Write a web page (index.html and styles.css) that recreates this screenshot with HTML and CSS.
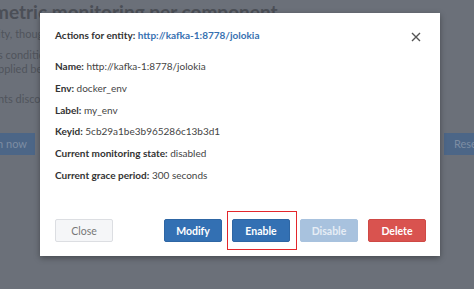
FILE: index.html
```html
<!DOCTYPE html>
<html>
<head>
<meta charset="utf-8">
<link rel="stylesheet" href="styles.css">
</head>
<body>
<div class="page">
  <h1 class="page-title">metric monitoring per component</h1>
  <p class="line l1">ity, though</p>
  <p class="line l2">s condition</p>
  <p class="line l3">pplied be</p>
  <p class="line l4">nts disco</p>
  <div class="page-actions">
    <span class="page-btn left">n now</span>
    <span class="page-btn right">Reset</span>
  </div>
</div>

<div class="modal">
  <div class="modal-header">
    <div class="modal-title">Actions for entity: <a class="link" href="#">http://kafka-1:8778/jolokia</a></div>
    <button class="close-x" aria-label="Close">
      <svg width="10" height="10" viewBox="0 0 10 10"><path d="M1 1L9 9M9 1L1 9" stroke="#555" stroke-width="1.4" fill="none"/></svg>
    </button>
  </div>
  <div class="modal-body">
    <div class="row"><b>Name:</b> http://kafka-1:8778/jolokia</div>
    <div class="row"><b>Env:</b> docker_env</div>
    <div class="row"><b>Label:</b> my_env</div>
    <div class="row"><b>Keyid:</b> 5cb29a1be3b965286c13b3d1</div>
    <div class="row"><b>Current monitoring state:</b> disabled</div>
    <div class="row"><b>Current grace period:</b> 300 seconds</div>
  </div>
  <div class="modal-footer">
    <button class="btn btn-default">Close</button>
    <div class="btn-group">
      <button class="btn btn-primary">Modify</button>
      <span class="highlight"><button class="btn btn-primary">Enable</button></span>
      <button class="btn btn-disabled">Disable</button>
      <button class="btn btn-danger">Delete</button>
    </div>
  </div>
</div>
</body>
</html>
```

FILE: styles.css
```css
html, body {
  margin: 0;
  padding: 0;
  width: 474px;
  height: 289px;
  overflow: hidden;
  background: #6b7079;
  font-family: "Lato", "Open Sans", sans-serif;
}
.page {
  margin-left: -7px;
}
.page-title {
  margin: 0;
  font-size: 19px;
  font-weight: 700;
  color: #4b4f57;
  line-height: 24px;
}
.line {
  margin: 0;
  padding-left: 5px;
  font-size: 11px;
  color: #50545c;
  line-height: 14px;
}
.l1 { margin-top: 3px; }
.l2 { margin-top: 7px; }
.l3 { margin-top: 0px; }
.l4 { margin-top: 16px; }
.page-actions {
  display: flex;
  justify-content: space-between;
  margin-top: 27px;
  width: 511px;
}
.page-btn {
  display: block;
  height: 22px;
  line-height: 22px;
  background: #4c6687;
  color: #7d8da3;
  font-size: 11px;
  padding: 0 8px 0 0;
}
.page-btn.left { width: 34px; text-align: right; }
.page-btn.right { width: 50px; padding: 0 0 0 10px; }

.modal {
  position: absolute;
  left: 40px;
  top: 13px;
  width: 400px;
  height: 243px;
  background: #fff;
  box-shadow: 0 2px 6px rgba(0,0,0,0.35);
  box-sizing: border-box;
  padding: 15px 14px 14px 15px;
  display: flex;
  flex-direction: column;
  color: #333;
}
.modal-header {
  display: flex;
  justify-content: space-between;
  align-items: center;
  height: 14px;
}
.modal-title {
  font-size: 10px;
  font-weight: 700;
  color: #333;
}
.link {
  color: #3771b1;
  text-decoration: none;
}
.close-x {
  border: 0;
  background: none;
  padding: 0;
  margin-right: 5px;
  margin-top: 4px;
  width: 10px;
  height: 10px;
  display: flex;
}
.modal-body {
  margin-top: 14px;
  font-size: 10px;
  color: #444;
}
.row {
  line-height: 21.8px;
  height: 21.8px;
}
.row b { color: #333; }
.modal-footer {
  margin-top: auto;
  display: flex;
  justify-content: space-between;
  align-items: center;
}
.btn-group {
  display: flex;
  align-items: center;
  gap: 10px;
}
.btn {
  width: 58px;
  height: 23px;
  border-radius: 2px;
  border: 1px solid transparent;
  font-family: "Lato", "Open Sans", sans-serif;
  font-size: 10.5px;
  font-weight: 700;
  color: #fff;
  padding: 0;
  box-sizing: border-box;
}
.btn-default {
  background: #f5f6f8;
  border-color: #dcdee2;
  color: #777;
  font-weight: 400;
}
.btn-primary {
  background: #3370b3;
  border-color: #2e66a4;
}
.btn-disabled {
  background: #a8c2de;
  border-color: #a8c2de;
  color: #e6edf5;
}
.btn-danger {
  background: #d9534f;
  border-color: #cf4945;
}
.highlight {
  display: flex;
  padding: 7px 6px 7px 4px;
  margin: -8px -7px -8px -5px;
  border: 1.3px solid #e3262b;
}
```
